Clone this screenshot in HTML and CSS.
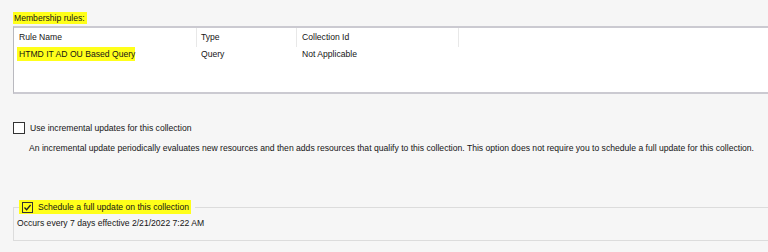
FILE: index.html
```html
<!DOCTYPE html>
<html lang="en">
<head>
    <meta charset="UTF-8">
    <title>Collection Properties</title>
    <link rel="stylesheet" href="styles.css">
</head>
<body>
<div class="wrap">
    <div class="title"><span class="mark">Membership rules:</span></div>

    <div class="list">
        <div class="head">
            <div class="col c1">Rule Name</div>
            <div class="col c2">Type</div>
            <div class="col c3">Collection Id</div>
            <div class="col c4"></div>
        </div>
        <div class="row">
            <div class="col c1"><span class="mark">HTMD IT AD OU Based Query</span></div>
            <div class="col c2">Query</div>
            <div class="col c3">Not Applicable</div>
        </div>
    </div>

    <div class="check">
        <span class="box"></span>
        <span>Use incremental updates for this collection</span>
    </div>
    <p class="desc">An incremental update periodically evaluates new resources and then adds resources that qualify to this collection. This option does not require you to schedule a full update for this collection.</p>

    <fieldset class="group">
        <legend>
            <span class="mark legend-in">
                <span class="box checked">
                    <svg width="9" height="9" viewBox="0 0 9 9"><path d="M1.5 4.5 L3.6 6.7 L7.6 2" fill="none" stroke="#222" stroke-width="1.3"/></svg>
                </span>
                <span>Schedule a full update on this collection</span>
            </span>
        </legend>
        <div class="occurs">Occurs every 7 days effective 2/21/2022 7:22 AM</div>
    </fieldset>
</div>
</body>
</html>
```

FILE: styles.css
```css
@charset "UTF-8";
/* reset */
body,p,fieldset,legend{margin:0;padding:0}

body{
    background:#f6f6f6;
    font:8.6px/12px "Liberation Sans", Arial, sans-serif;
    color:#151515;
    overflow:hidden;
}
.wrap{
    padding:12px 0 0 13px;
}
.mark{
    background:#ffff1a;
}

/* membership rules */
.title .mark{
    display:inline-block;
    height:12px;
    padding:0 2px 0 1px;
}
.list{
    margin:2px -4px 0 0;
    height:64px;
    background:#fff;
    border-top:2px solid #cbcad1;
    border-bottom:2px solid #cbcad1;
    border-left:1px solid #b9b9bf;
}
.head,.row{
    display:flex;
}
.head{
    height:19px;
    align-items:center;
}
.head .col{
    height:19px;
    line-height:19px;
    border-right:1px solid #e8e8e8;
    box-sizing:border-box;
}
.c1{ width:183px; padding-left:5px; box-sizing:border-box; }
.c2{ width:100px; padding-left:4px; box-sizing:border-box; }
.c3{ width:162px; padding-left:5px; box-sizing:border-box; }
.head .c4{ flex:1; border-right:0; }
.row{
    height:14px;
    line-height:14px;
}
.row .c1{ padding-left:3px; }
.row .mark{
    display:inline-block;
    padding-left:2px;
}

/* incremental */
.check{
    display:flex;
    align-items:center;
    gap:5px;
    margin-top:28px;
    height:12px;
}
.box{
    width:12px;
    height:12px;
    box-sizing:border-box;
    border:1px solid #333;
    background:#fff;
    flex:none;
}
.desc{
    margin-top:8px;
    padding-left:16px;
    white-space:nowrap;
}

/* full update group */
.group{
    margin:46px -4px 0 0;
    padding:3px 0 11px 3px;
    border:1px solid #dcdcdc;
    min-width:0;
}
.group legend{
    margin-left:2px;
    padding:0 4px 0 0;
}
.legend-in{
    display:flex;
    align-items:center;
    gap:5px;
    height:14px;
    padding:0 2px 0 3px;
}
.box.checked{
    width:11px;
    height:11px;
    background:transparent;
    display:flex;
    align-items:center;
    justify-content:center;
}
.box.checked svg{
    display:block;
}
.occurs{
    height:12px;
}
```
